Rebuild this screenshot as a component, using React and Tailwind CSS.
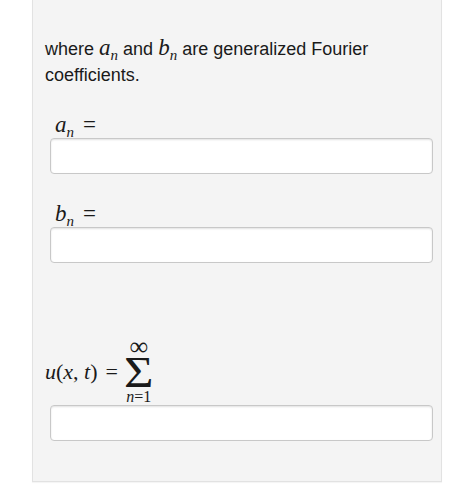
import React from "react";

function Sub({ base }) {
  return (
    <span className="whitespace-nowrap">
      <i>{base}</i>
      <i className="text-[15px] relative top-[5px]">n</i>
    </span>
  );
}

function Field() {
  return (
    <div className="h-[36px] w-[383px] ml-[17px] rounded-[4px] border border-[#c8c8c8] bg-white shadow-[inset_0_1px_2px_rgba(0,0,0,0.12)]" />
  );
}

export default function App() {
  return (
    <div className="w-[474px] h-[501px] bg-white">
      <div className="ml-[32px] w-[410px] h-[482px] border border-t-0 border-[#e2e2e2] bg-[#f4f4f4] shadow-[0_1px_1px_rgba(0,0,0,0.04)] pt-[36px]">
        <p
          className="pl-[12px] pr-[8px] text-[18px] leading-[26px] text-[#1a1a1a]"
          style={{ fontFamily: '"Liberation Sans", Arial, sans-serif' }}
        >
          where{" "}
          <span className="text-[23px] leading-[20px]" style={{ fontFamily: '"Liberation Serif", serif' }}>
            <Sub base="a" />
          </span>{" "}
          and{" "}
          <span className="text-[23px] leading-[20px]" style={{ fontFamily: '"Liberation Serif", serif' }}>
            <Sub base="b" />
          </span>{" "}
          are generalized Fourier coefficients.
        </p>

        <div
          className="mt-[24px] pl-[22px] h-[26px] text-[23px] leading-[26px] text-[#1a1a1a]"
          style={{ fontFamily: '"Liberation Serif", serif' }}
        >
          <Sub base="a" />
          <span className="ml-[9px]">=</span>
        </div>
        <Field />

        <div
          className="mt-[27px] pl-[22px] h-[26px] text-[23px] leading-[26px] text-[#1a1a1a]"
          style={{ fontFamily: '"Liberation Serif", serif' }}
        >
          <Sub base="b" />
          <span className="ml-[9px]">=</span>
        </div>
        <Field />

        <div
          className="mt-[76px] pl-[12px] flex items-center text-[#1a1a1a]"
          style={{ fontFamily: '"Liberation Serif", serif' }}
        >
          <span className="text-[22px] leading-[26px]">
            <i>u</i>(<i>x</i>, <i>t</i>)
          </span>
          <span className="text-[22px] leading-[26px] mx-[8px]">=</span>
          <span className="flex flex-col items-center">
            <span className="text-[26px] leading-[16px]">∞</span>
            <span className="text-[44px] leading-[44px] -mt-[4px] -mb-[8px] scale-x-[1.15]">Σ</span>
            <span className="mt-[2px] text-[16px] leading-[16px]">
              <i>n</i>=1
            </span>
          </span>
        </div>
        <Field />
      </div>
    </div>
  );
}
